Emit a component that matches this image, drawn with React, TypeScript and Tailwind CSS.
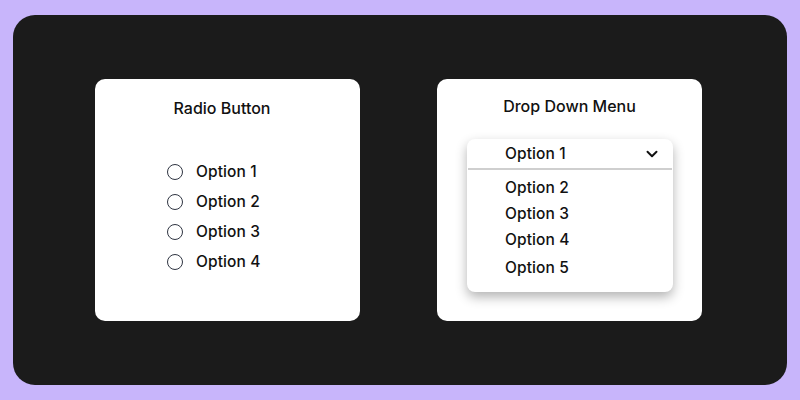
import { ChevronDown } from 'lucide-react'

const font = { fontFamily: 'Inter, "Noto Sans", sans-serif' }

function RadioCard() {
  const options = ['Option 1', 'Option 2', 'Option 3', 'Option 4']
  return (
    <div className="flex h-[242px] w-[265px] flex-col rounded-[10px] bg-white">
      <h3 className="mt-[19px] self-center pr-[11px] text-[16px] leading-[20px] font-medium text-[#111]">Radio Button</h3>
      <div className="mt-[39px] ml-[72px] flex flex-col">
        {options.map((o) => (
          <label key={o} className="flex h-[30px] items-center gap-[13px]">
            <span className="h-[16px] w-[16px] rounded-full border-[1.5px] border-[#2f3542]" />
            <span className="text-[15.5px] font-medium tracking-[0.1px] text-[#111]">{o}</span>
          </label>
        ))}
      </div>
    </div>
  )
}

function DropdownCard() {
  const options = ['Option 2', 'Option 3', 'Option 4']
  return (
    <div className="flex h-[242px] w-[265px] flex-col rounded-[10px] bg-white">
      <h3 className="mt-[17px] self-center text-[16px] leading-[20px] font-medium text-[#111]">Drop Down Menu</h3>
      <div className="mt-[23px] ml-[30px] w-[206px] rounded-[8px] bg-white pb-[11px] shadow-[0_5px_12px_rgba(0,0,0,0.3)]">
        <div className="flex h-[29px] items-center justify-between pr-[12px] pl-[38px]">
          <span className="text-[15.5px] font-medium tracking-[0.1px] text-[#111]">Option 1</span>
          <ChevronDown size={18} strokeWidth={2.6} className="text-[#111]" />
        </div>
        <div className="mx-[1px] h-[2px] bg-[#cfcfcf]" />
        <div className="flex flex-col pt-[5px] pl-[38px]">
          {options.map((o) => (
            <span key={o} className="flex h-[26px] items-center text-[15.5px] font-medium tracking-[0.1px] text-[#111]">{o}</span>
          ))}
          <span className="mt-[2px] flex h-[26px] items-center text-[15.5px] font-medium tracking-[0.1px] text-[#111]">Option 5</span>
        </div>
      </div>
    </div>
  )
}

export default function App() {
  return (
    <div className="h-[400px] w-[800px] bg-[#c8b5fb] px-[13px] py-[15px]" style={font}>
      <div className="flex h-full items-center justify-center gap-[77px] rounded-[22px] bg-[#1b1b1b] pr-[3px]">
        <RadioCard />
        <DropdownCard />
      </div>
    </div>
  )
}
